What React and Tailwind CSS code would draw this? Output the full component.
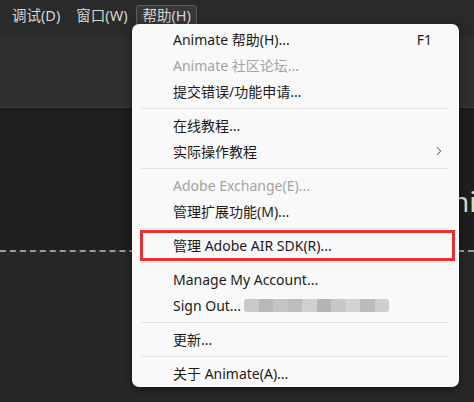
import { ChevronRight } from "lucide-react";

// Help menu items, in order; "sep" marks a divider line
const helpMenu = [
  { label: "Animate 帮助(H)...", shortcut: "F1" },
  { label: "Animate 社区论坛...", disabled: true },
  { label: "提交错误/功能申请..." },
  "sep",
  { label: "在线教程..." },
  { label: "实际操作教程", submenu: true },
  "sep",
  { label: "Adobe Exchange(E)...", disabled: true },
  { label: "管理扩展功能(M)..." },
  "sep",
  { label: "管理 Adobe AIR SDK(R)...", marked: true },
  "sep",
  { label: "Manage My Account..." },
  { label: "Sign Out...", blurred: true },
  "sep",
  { label: "更新..." },
  "sep",
  { label: "关于 Animate(A)..." },
];

const font = {
  fontFamily: '"Noto Sans", "Noto Sans CJK SC", sans-serif',
};

function BlurredName() {
  // pixelated account name
  const blocks = ["#c9c9c9", "#b8b8b8", "#c4c4c4", "#bdbdbd", "#d0d0d0", "#b5b5b5", "#c8c8c8", "#d4d4d4", "#bcbcbc", "#cfcfcf"];
  return (
    <span className="ml-[3px] flex h-[13px] overflow-hidden rounded-[3px]">
      {blocks.map((c, i) => (
        <span key={i} className="h-full w-[14.5px]" style={{ backgroundColor: c }} />
      ))}
    </span>
  );
}

function MenuRow({ item }) {
  return (
    <div className="relative flex h-[26px] items-center pl-[41px] pr-[27px]">
      <span className={`text-[14px] ${item.disabled ? "text-[#a3a3a3]" : "text-[#1b1b1b]"}`}>
        {item.label}
      </span>
      {item.blurred && <BlurredName />}
      <span className="flex-1" />
      {item.shortcut && <span className="text-[14px] text-[#1b1b1b]">{item.shortcut}</span>}
      {item.submenu && <ChevronRight className="-mr-[14px] h-[14px] w-[14px] text-[#333]" strokeWidth={1.6} />}
      {item.marked && (
        <div className="absolute left-[8px] right-[4px] -top-[2px] -bottom-[3px] border-[3px] border-[#ea3030]" />
      )}
    </div>
  );
}

export default function App() {
  return (
    <div className="relative h-[402px] w-[474px] overflow-hidden bg-[#272727]" style={font}>
      <div className="flex h-[36px] items-start gap-[16px] bg-[#2a2a2a] pl-[12px] pt-[5px] text-[14.5px] text-[#d6d6d6]">
        <span className="leading-[20px]">调试(D)</span>
        <span className="leading-[20px]">窗口(W)</span>
        <span className="-ml-[7px] rounded-[3px] border border-[#5c5c5c] bg-[#383838] px-[5px] leading-[19px]">帮助(H)</span>
      </div>
      <div className="h-[72px] border-b border-[#3a3a3a] bg-[#2f2f2f]" />
      <div className="h-[142px] overflow-hidden bg-[#1e1e1e] pl-[434px] pt-[77px]">
        <span className="block whitespace-nowrap text-[28px] leading-[32px] text-[#d9d9d9]">Animate</span>
      </div>
      <div className="border-t-2 border-dashed border-[#9a9a9a]" />

      <div className="absolute left-[132px] top-[24px] w-[327px] rounded-[7px] bg-[#f9f9f9] pb-[1px] pt-[2px] shadow-[0_2px_8px_rgba(0,0,0,0.5)]">
        {helpMenu.map((item, i) =>
          item === "sep" ? (
            <div key={i} className="flex h-[8px] items-center pl-[9px] pr-[11px]">
              <div className="h-px w-full bg-[#e2e2e2]" />
            </div>
          ) : (
            <MenuRow key={i} item={item} />
          )
        )}
      </div>
    </div>
  );
}
